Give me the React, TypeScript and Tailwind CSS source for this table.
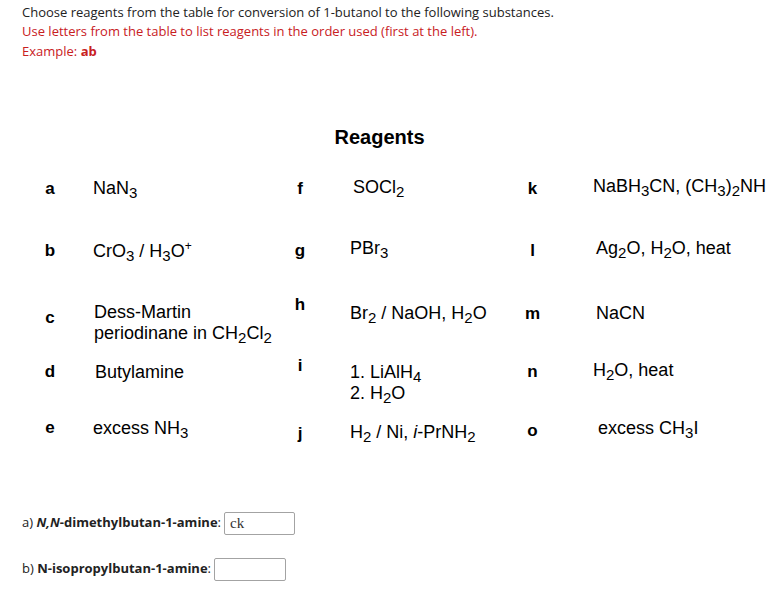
import React from "react";

const S = ({ children }: { children: React.ReactNode }) => (
  <span className="text-[15px] relative top-[4px] leading-none">{children}</span>
);
const Sup = ({ children }: { children: React.ReactNode }) => (
  <span className="text-[12px] relative -top-[7px] leading-none">{children}</span>
);

const Letter = ({ c, cls = "" }: { c: string; cls?: string }) => (
  <div className={"text-center font-bold text-[17px] leading-[21px] " + cls}>{c}</div>
);

const Row = ({ h, children }: { h: string; children: React.ReactNode }) => (
  <div className={"grid grid-cols-[40px_220px_20px_205px_35px_1fr] items-start " + h}>{children}</div>
);

export default function App() {
  return (
    <div className="w-[779px] h-[598px] bg-white overflow-hidden" style={{ fontFamily: "'Open Sans', sans-serif" }}>
      <div className="pl-[22px] pt-[3px] text-[13px] leading-[19px]">
        <div className="text-[#222]">Choose reagents from the table for conversion of 1-butanol to the following substances.</div>
        <div className="text-[#c8201e]">Use letters from the table to list reagents in the order used (first at the left).</div>
        <div className="text-[#c8201e] mt-[1px]">
          Example: <b>ab</b>
        </div>
      </div>

      <div className="text-black" style={{ fontFamily: "'Liberation Sans', Arial, sans-serif" }}>
        <div className="mt-[64px] text-center font-bold text-[20px] leading-[24px] pr-[20px]">Reagents</div>
        <div className="mt-[29px] pl-[30px] text-[18px] leading-[21px]">
          <Row h="h-[62px]">
            <Letter c="a" />
            <div className="pl-[23px]">
              NaN<S>3</S>
            </div>
            <Letter c="f" />
            <div className="pl-[43px] -mt-[1px]">
              SOCl<S>2</S>
            </div>
            <Letter c="k" />
            <div className="pl-[43px] -mt-[2px]">
              NaBH<S>3</S>CN, (CH<S>3</S>)<S>2</S>NH
            </div>
          </Row>
          <Row h="h-[62px]">
            <Letter c="b" />
            <div className="pl-[23px] mt-[1px]">
              CrO<S>3</S> / H<S>3</S>O<Sup>+</Sup>
            </div>
            <Letter c="g" />
            <div className="pl-[40px] -mt-[2px]">
              PBr<S>3</S>
            </div>
            <Letter c="l" />
            <div className="pl-[46px] -mt-[2px]">
              Ag<S>2</S>O, H<S>2</S>O, heat
            </div>
          </Row>
          <Row h="h-[60px]">
            <Letter c="c" cls="mt-[5px]" />
            <div className="pl-[24px]">
              Dess-Martin
              <br />
              periodinane in CH<S>2</S>Cl<S>2</S>
            </div>
            <Letter c="h" cls="-mt-[8px]" />
            <div className="pl-[40px] mt-[1px]">
              Br<S>2</S> / NaOH, H<S>2</S>O
            </div>
            <Letter c="m" cls="mt-[1px]" />
            <div className="pl-[46px] mt-[1px]">NaCN</div>
          </Row>
          <Row h="h-[56px]">
            <Letter c="d" cls="-mt-[1px]" />
            <div className="pl-[25px]">Butylamine</div>
            <Letter c="i" cls="-mt-[7px]" />
            <div className="pl-[40px]">
              1. LiAlH<S>4</S>
              <br />
              2. H<S>2</S>O
            </div>
            <Letter c="n" cls="-mt-[1px]" />
            <div className="pl-[43px] -mt-[2px]">
              H<S>2</S>O, heat
            </div>
          </Row>
          <Row h="h-[60px]">
            <Letter c="e" cls="-mt-[1px]" />
            <div className="pl-[23px]">
              excess NH<S>3</S>
            </div>
            <Letter c="j" cls="mt-[5px]" />
            <div className="pl-[40px] mt-[4px]">
              H<S>2</S> / Ni, <i>i</i>-PrNH<S>2</S>
            </div>
            <Letter c="o" cls="mt-[2px]" />
            <div className="pl-[48px]">
              excess CH<S>3</S>I
            </div>
          </Row>
        </div>
      </div>

      <div className="pl-[22px] mt-[33px] text-[13px] text-[#222]">
        <div className="flex items-center h-[24px]">
          <span>
            a) <b><i>N,N</i>-dimethylbutan-1-amine</b>:
          </span>
          <div
            className="ml-[3px] w-[71px] h-[23px] border border-[#a3a3a3] rounded-[2px] pl-[5px] text-[15px] leading-[21px] text-[#333]"
            style={{ fontFamily: "'Liberation Serif', serif" }}
          >
            ck
          </div>
        </div>
        <div className="flex items-center h-[24px] mt-[22px]">
          <span>
            b) <b>N-isopropylbutan-1-amine</b>:
          </span>
          <div className="ml-[3px] w-[72px] h-[23px] border border-[#a3a3a3] rounded-[2px]" />
        </div>
      </div>
    </div>
  );
}
